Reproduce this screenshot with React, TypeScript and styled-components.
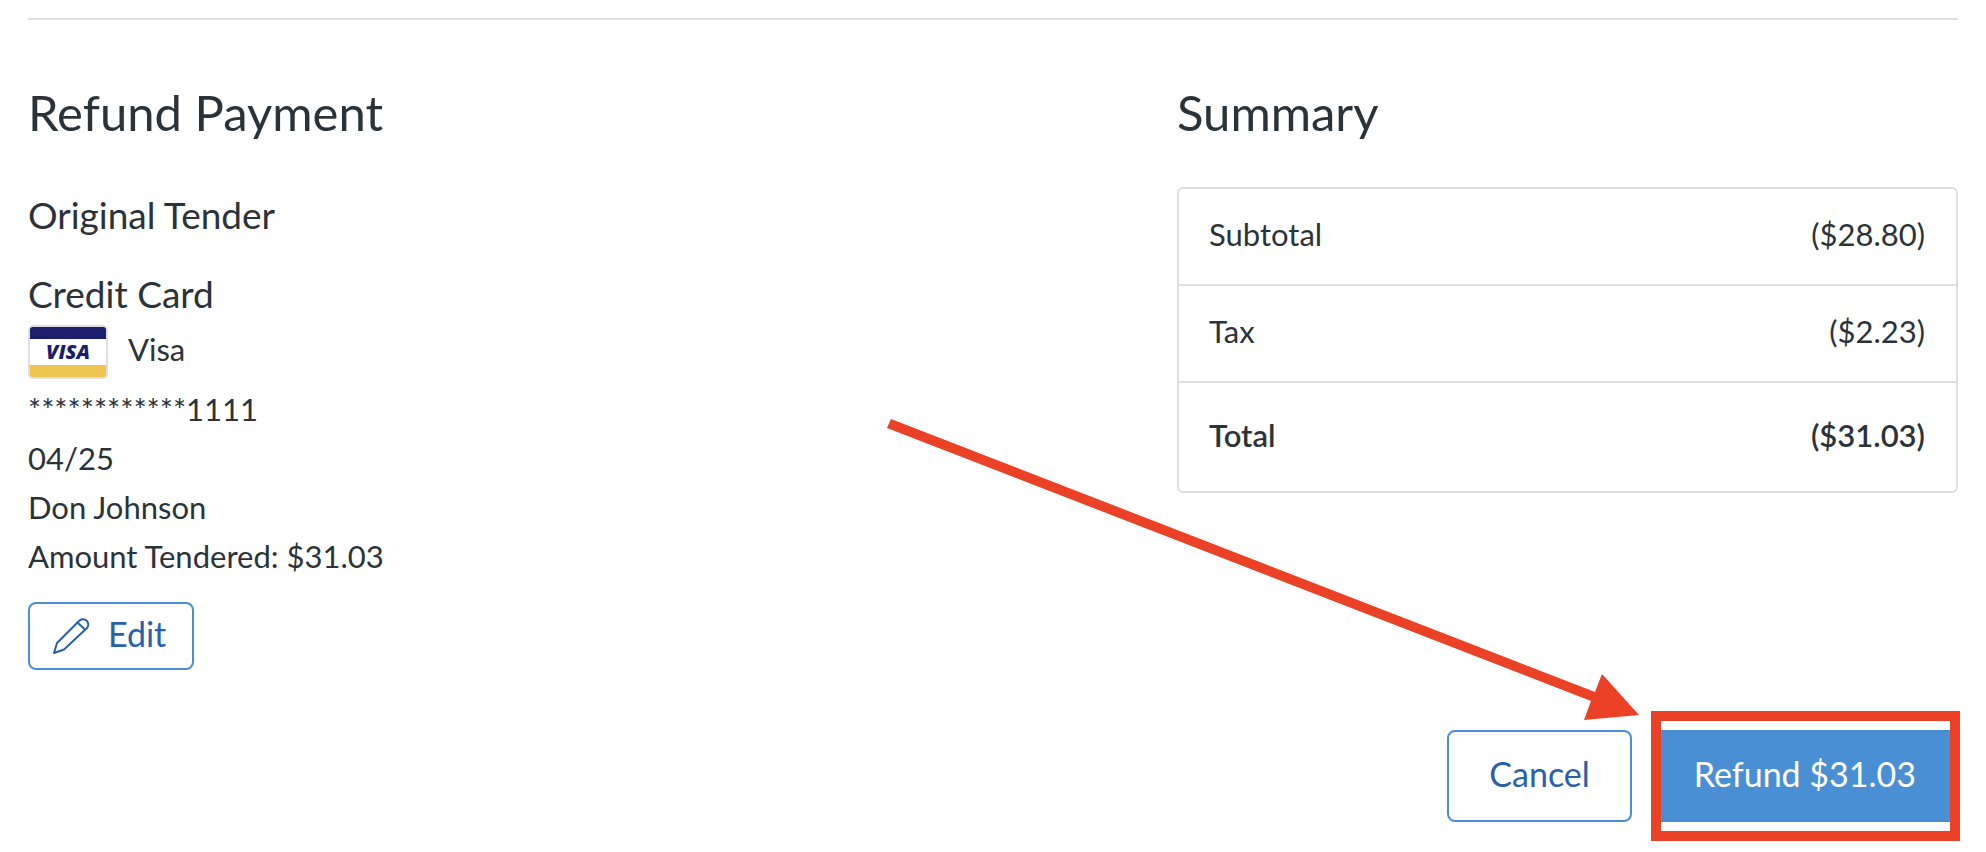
import React from 'react';
import styled, { createGlobalStyle, css } from 'styled-components';

const color = {
  text: '#2b3338',
  line: '#dedede',
  blue: '#4a8fd3',
  link: '#2961a8',
  red: '#ea4127',
  navy: '#1b1e6c',
  gold: '#eec550',
};

const GlobalStyle = createGlobalStyle`
  *, *::before, *::after { box-sizing: border-box; }
  body {
    margin: 0;
    background: #fff;
    color: ${color.text};
    font: 31px/49px Lato, "Open Sans", sans-serif;
  }
`;

const Page = styled.main`
  padding: 18px 28px 30px;
`;

const Divider = styled.hr`
  height: 2px;
  margin: 0 0 62px;
  border: 0;
  background: ${color.line};
`;

const Columns = styled.div`
  display: grid;
  grid-template-columns: minmax(0, 1149fr) minmax(0, 781fr);
`;

const Title = styled.h2`
  margin: 0;
  font-size: 49px;
  font-weight: 400;
  line-height: 60px;
`;

const Subtitle = styled.h3`
  margin: 51px 0 35px;
  font-size: 37px;
  font-weight: 400;
  line-height: 44px;
`;

const TenderType = styled.h4`
  margin: 0 0 9px;
  font-size: 37px;
  font-weight: 400;
  line-height: 44px;
`;

const CardBrand = styled.div`
  display: flex;
  align-items: center;
  gap: 20px;
  height: 54px;
`;

const BrandMark = styled.span`
  display: flex;
  align-items: center;
  justify-content: center;
  width: 80px;
  height: 54px;
  border: 2px solid ${color.line};
  border-radius: 5px;
  background: linear-gradient(
    ${color.navy} 12px,
    #fff 12px,
    #fff 38px,
    ${color.gold} 38px
  );
  color: ${color.navy};
  font: italic 800 20px/26px "Open Sans", Lato, sans-serif;
`;

const BrandName = styled.span`
  padding-bottom: 6px;
`;

const Details = styled.ul`
  margin: 6px 0 21px;
  padding: 0;
  list-style: none;
`;

const buttonBase = css`
  display: inline-flex;
  align-items: center;
  justify-content: center;
  border: 2px solid ${color.blue};
  border-radius: 8px;
  font: 34px/40px Lato, "Open Sans", sans-serif;
  cursor: pointer;
`;

const EditButton = styled.button`
  ${buttonBase}
  gap: 18px;
  height: 68px;
  padding: 0 26px 0 22px;
  background: #fff;
  color: ${color.link};
`;

const ButtonLabel = styled.span`
  padding-bottom: 4px;
`;

const ActionButton = styled.button<{ $primary?: boolean }>`
  ${buttonBase}
  height: 92px;
  padding: 0 40px;
  background: ${(p) => (p.$primary ? color.blue : '#fff')};
  color: ${(p) => (p.$primary ? '#fff' : color.link)};
`;

const SummaryTable = styled.table`
  width: 100%;
  margin-top: 45px;
  border: 2px solid ${color.line};
  border-radius: 6px;
  border-spacing: 0;
`;

const SummaryRow = styled.tr<{ $total?: boolean }>`
  height: ${(p) => (p.$total ? 108 : 97)}px;
  font-weight: ${(p) => (p.$total ? 600 : 400)};

  & > * {
    padding: 0 31px 4px 30px;
    border-bottom: ${(p) => (p.$total ? '0' : `2px solid ${color.line}`)};
    font-weight: inherit;
  }
  & > th { text-align: left; }
  & > td { text-align: right; }
`;

const Actions = styled.div`
  display: flex;
  justify-content: flex-end;
  gap: 20px;
  margin-top: 60px;
`;

const Highlight = styled.div`
  position: relative;
  display: flex;

  &::after {
    content: '';
    position: absolute;
    inset: -19px -2px -19px -1px;
    border: 10px solid ${color.red};
    pointer-events: none;
  }
`;

const Arrow = styled.svg`
  position: absolute;
  right: 319px;
  bottom: 101px;
  pointer-events: none;
`;

const details = ['************1111', '04/25', 'Don Johnson', 'Amount Tendered: $31.03'];

const rows = [
  { label: 'Subtotal', amount: '($28.80)' },
  { label: 'Tax', amount: '($2.23)' },
  { label: 'Total', amount: '($31.03)', total: true },
];

const PencilIcon = () => (
  <svg width="38" height="38" viewBox="0 0 38 38" fill="none" stroke="currentColor" strokeWidth="2" strokeLinejoin="round" strokeLinecap="round" aria-hidden="true">
    <path d="M2 36 5 26 27 4a5.2 5.2 0 0 1 8 7L12 32.5Z" />
    <path d="m25.5 5.5 7.5 7" />
  </svg>
);

export default function App() {
  return (
    <>
      <GlobalStyle />
      <Page>
        <Divider />
        <Columns>
          <section>
            <Title>Refund Payment</Title>
            <Subtitle>Original Tender</Subtitle>
            <TenderType>Credit Card</TenderType>
            <CardBrand>
              <BrandMark aria-hidden="true">VISA</BrandMark>
              <BrandName>Visa</BrandName>
            </CardBrand>
            <Details>
              {details.map((line) => (
                <li key={line}>{line}</li>
              ))}
            </Details>
            <EditButton type="button">
              <PencilIcon />
              <ButtonLabel>Edit</ButtonLabel>
            </EditButton>
          </section>
          <section>
            <Title>Summary</Title>
            <SummaryTable>
              <tbody>
                {rows.map((row) => (
                  <SummaryRow key={row.label} $total={row.total}>
                    <th scope="row">{row.label}</th>
                    <td>{row.amount}</td>
                  </SummaryRow>
                ))}
              </tbody>
            </SummaryTable>
          </section>
        </Columns>
        <Actions>
          <ActionButton type="button">
            <ButtonLabel>Cancel</ButtonLabel>
          </ActionButton>
          <Highlight>
            <ActionButton type="button" $primary>
              <ButtonLabel>Refund $31.03</ButtonLabel>
            </ActionButton>
            <Arrow width="752" height="302" viewBox="0 0 752 302" aria-hidden="true">
              <path fill={color.red} d="M4 0 708 273 715 255 752 296 697 301 704 282 0 9Z" />
            </Arrow>
          </Highlight>
        </Actions>
      </Page>
    </>
  );
}
